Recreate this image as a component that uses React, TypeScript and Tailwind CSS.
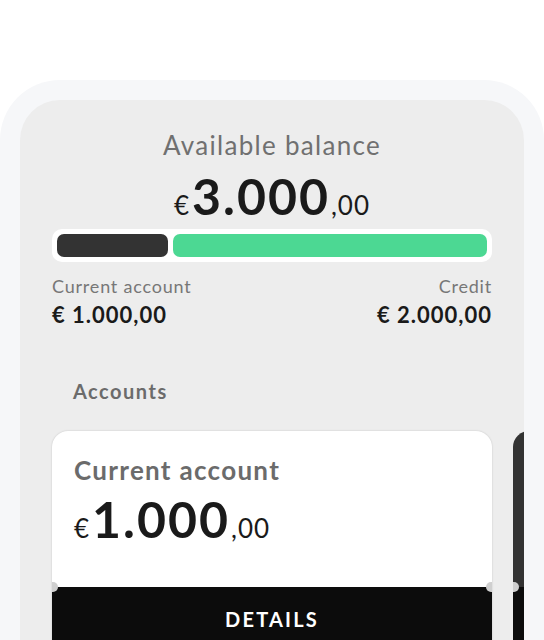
import React from 'react';

const Amount: React.FC<{ value: string; cents: string }> = ({ value, cents }) => (
  <div className="flex items-baseline text-[#1a1a1a]">
    <span className="text-[26px] leading-none">€</span>
    <span className="ml-[3px] text-[50px] font-bold leading-none tracking-[2px]">{value}</span>
    <span className="ml-[1px] text-[26px] leading-none tracking-[1px]">,{cents}</span>
  </div>
);

const Notch: React.FC<{ side: 'left' | 'right' }> = ({ side }) => (
  <span
    className={`absolute top-[-5px] h-[10px] w-[12px] rounded-full bg-[#cfcfcf] ${side === 'left' ? 'left-[-6px]' : 'right-[-6px]'}`}
  />
);

const AccountCard: React.FC = () => (
  <div className="w-[440px] shrink-0 overflow-hidden rounded-[16px] bg-white shadow-[0_0_2px_rgba(0,0,0,0.18)]">
    <div className="h-[156px] px-[22px] pt-[24px]">
      <p className="text-[26px] font-bold leading-[30px] tracking-[1.3px] text-[#6b6b6b]">Current account</p>
      <div className="mt-[9px]">
        <Amount value="1.000" cents="00" />
      </div>
    </div>
    <div className="relative h-[120px] bg-[#0c0c0c]">
      <Notch side="left" />
      <Notch side="right" />
      <p className="pt-[17px] text-center text-[20px] font-bold tracking-[2.2px] text-white">DETAILS</p>
    </div>
  </div>
);

const App: React.FC = () => {
  return (
    <div className="h-[640px] w-[544px] overflow-hidden bg-white font-['Lato',sans-serif]">
      <div className="pt-20">
        <div className="h-[640px] rounded-t-[60px] bg-[#f6f7f9] px-5 pt-5">
          <div className="h-full overflow-hidden rounded-t-[40px] bg-[#ededed] px-8 pt-[28px]">
            <p className="text-center text-[26px] leading-[34px] tracking-[1.3px] text-[#707070]">Available balance</p>
            <div className="mt-[9px] flex justify-center">
              <Amount value="3.000" cents="00" />
            </div>

            <div className="mt-[8px] flex h-[33px] gap-[5px] rounded-[10px] bg-white p-[5px]">
              <div className="w-[111px] rounded-[7px] bg-[#333333]" />
              <div className="flex-1 rounded-[7px] bg-[#4cd893]" />
            </div>

            <div className="mt-[13px] flex justify-between">
              <div>
                <p className="text-[18px] leading-[22px] tracking-[0.8px] text-[#777777]">Current account</p>
                <p className="mt-[6px] text-[22px] font-bold leading-[24px] tracking-[1px] text-[#1a1a1a]">€ 1.000,00</p>
              </div>
              <div className="text-right">
                <p className="text-[18px] leading-[22px] tracking-[0.8px] text-[#777777]">Credit</p>
                <p className="mt-[6px] text-[22px] font-bold leading-[24px] tracking-[1px] text-[#1a1a1a]">€ 2.000,00</p>
              </div>
            </div>

            <p className="mt-[52px] pl-[21px] text-[20px] font-bold leading-[24px] tracking-[1.5px] text-[#6b6b6b]">Accounts</p>

            <div className="mt-[28px] flex gap-[21px]">
              <AccountCard />
              <div className="w-[440px] shrink-0 overflow-hidden rounded-[16px] bg-[#333333]">
                <div className="h-[156px]" />
                <div className="relative h-[120px] bg-[#0c0c0c]">
                  <Notch side="left" />
                </div>
              </div>
            </div>
          </div>
        </div>
      </div>
    </div>
  );
};

export default App;
